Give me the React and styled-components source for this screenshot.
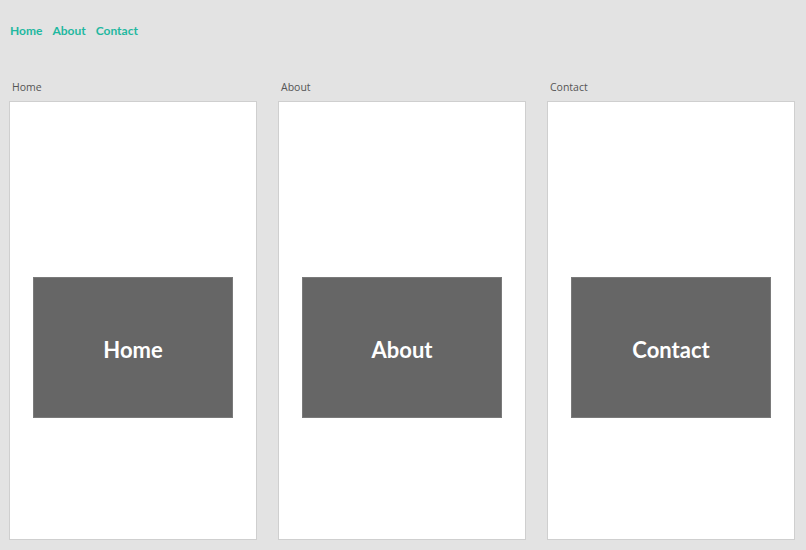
import React from 'react'
import styled, { createGlobalStyle } from 'styled-components'

const pages = ['Home', 'About', 'Contact']

export default function App() {
    return (
        <>
            <GlobalStyle />
            <Page>
                <Nav>
                    {pages.map(p => (
                        <NavLink key={p} href="#">{p}</NavLink>
                    ))}
                </Nav>
                <Panels>
                    {pages.map(p => (
                        <Column key={p}>
                            <Label>{p}</Label>
                            <Card>
                                <Block>{p}</Block>
                            </Card>
                        </Column>
                    ))}
                </Panels>
            </Page>
        </>
    )
}

/**STYLED COMPONENTS */

const GlobalStyle = createGlobalStyle`
    body {
        margin: 0;
        background-color: #e3e3e3;
        font-family: 'Lato', 'Open Sans', sans-serif;
    }
`;

const Page = styled.div`
    width: 806px;
    height: 550px;
    overflow: hidden;
    padding: 22px 0 0 9px;
    box-sizing: border-box;
`;

const Nav = styled.nav`
    display: flex;
    gap: 10px;
    padding-left: 1px;
    height: 17px;
    align-items: center;
`;

const NavLink = styled.a`
    color: #1fb8a0;
    font-family: 'Lato', sans-serif;
    font-weight: 700;
    font-size: 12px;
    text-decoration: none;
`;

const Panels = styled.div`
    display: flex;
    gap: 21px;
    margin-top: 40px;
`;

const Column = styled.div`
    display: flex;
    flex-direction: column;
    width: 248px;
`;

const Label = styled.div`
    font-family: 'Open Sans', sans-serif;
    font-size: 10.5px;
    color: #555;
    padding-left: 3px;
    height: 16px;
    line-height: 16px;
    margin-bottom: 6px;
`;

const Card = styled.div`
    box-sizing: border-box;
    height: 439px;
    background: #fff;
    border: 1px solid #cfcfcf;
    padding: 175px 0 0 23px;
`;

const Block = styled.div`
    box-sizing: border-box;
    width: 200px;
    height: 141px;
    background: #666;
    border: 1px solid #7a7a7a;
    display: flex;
    align-items: center;
    justify-content: center;
    color: #fff;
    font-family: 'Lato', sans-serif;
    font-weight: 700;
    font-size: 22px;
    padding-top: 3px;
`;
